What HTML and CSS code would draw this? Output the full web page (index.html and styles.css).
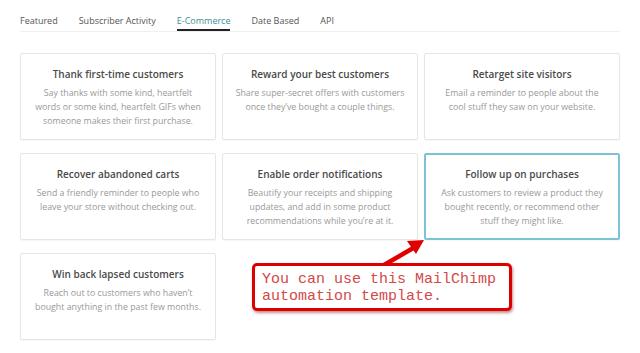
FILE: index.html
```html
<!DOCTYPE html>
<html>
<head>
<meta charset="utf-8">
<link rel="stylesheet" href="styles.css">
</head>
<body>
<div class="page">
  <nav class="tabs">
    <span class="tab">Featured</span>
    <span class="tab">Subscriber Activity</span>
    <span class="tab active">E-Commerce</span>
    <span class="tab">Date Based</span>
    <span class="tab">API</span>
  </nav>
  <div class="grid">
    <div class="card">
      <h3>Thank first-time customers</h3>
      <p>Say thanks with some kind, heartfelt<br>words or some kind, heartfelt GIFs when<br>someone makes their first purchase.</p>
    </div>
    <div class="card">
      <h3>Reward your best customers</h3>
      <p>Share super-secret offers with customers<br>once they’ve bought a couple things.</p>
    </div>
    <div class="card">
      <h3>Retarget site visitors</h3>
      <p>Email a reminder to people about the<br>cool stuff they saw on your website.</p>
    </div>
    <div class="card">
      <h3>Recover abandoned carts</h3>
      <p>Send a friendly reminder to people who<br>leave your store without checking out.</p>
    </div>
    <div class="card">
      <h3>Enable order notifications</h3>
      <p>Beautify your receipts and shipping<br>updates, and add in some product<br>recommendations while you’re at it.</p>
    </div>
    <div class="card selected">
      <h3>Follow up on purchases</h3>
      <p>Ask customers to review a product they<br>bought recently, or recommend other<br>stuff they might like.</p>
    </div>
    <div class="card">
      <h3>Win back lapsed customers</h3>
      <p>Reach out to customers who haven’t<br>bought anything in the past few months.</p>
    </div>
  </div>
  <svg class="arrow" width="60" height="40" viewBox="0 0 60 40">
    <line x1="8" y1="33" x2="39" y2="15" stroke="#e00000" stroke-width="4.5" stroke-linecap="round"/>
    <polygon points="48,8 31,9 40,22" fill="#e00000"/>
  </svg>
  <div class="note">You can use this MailChimp<br>automation template.</div>
</div>
</body>
</html>
```
FILE: styles.css
```css
html, body {
  margin: 0;
  padding: 0;
  background: #fff;
}
.page {
  position: relative;
  width: 640px;
  height: 353px;
  font-family: "Open Sans", "Liberation Sans", sans-serif;
  overflow: hidden;
}
.tabs {
  display: flex;
  gap: 21px;
  margin: 0 20px;
  padding-top: 12px;
  border-bottom: 1px solid #f0f0f0;
  height: 19px;
}
.tab {
  font-size: 9px;
  color: #555;
  line-height: 17px;
  height: 19px;
  box-sizing: border-box;
}
.tab.active {
  color: #3f8e99;
  border-bottom: 2px solid #222;
}
.grid {
  display: grid;
  grid-template-columns: repeat(3, 196px);
  grid-auto-rows: 87px;
  column-gap: 6px;
  row-gap: 13px;
  margin: 21px 20px 0;
}
.card {
  box-sizing: border-box;
  border: 1px solid #e6e6e6;
  border-radius: 2px;
  box-shadow: 0 1px 1px rgba(0,0,0,0.04);
  padding: 12px 6px 0;
  text-align: center;
  white-space: nowrap;
}
.card.selected {
  border: 2px solid #7cc3d6;
  padding: 11px 5px 0;
}
.card h3 {
  margin: 0;
  font-size: 10px;
  font-weight: 600;
  line-height: 16px;
  color: #4a4a4a;
}
.card p {
  margin: 4px 0 0;
  font-size: 8.8px;
  line-height: 14px;
  color: #999;
}
.arrow {
  position: absolute;
  left: 376px;
  top: 232px;
}
.note {
  position: absolute;
  left: 252px;
  top: 263px;
  width: 260px;
  height: 48px;
  box-sizing: border-box;
  border: 3px solid #dd0000;
  border-radius: 5px;
  box-shadow: 1px 2px 3px rgba(120,0,0,0.45);
  background: #fff;
  padding: 5px 0 0 7px;
  font-family: "Liberation Mono", "Courier New", monospace;
  font-size: 15px;
  line-height: 17px;
  color: #d44848;
  white-space: nowrap;
}
```
